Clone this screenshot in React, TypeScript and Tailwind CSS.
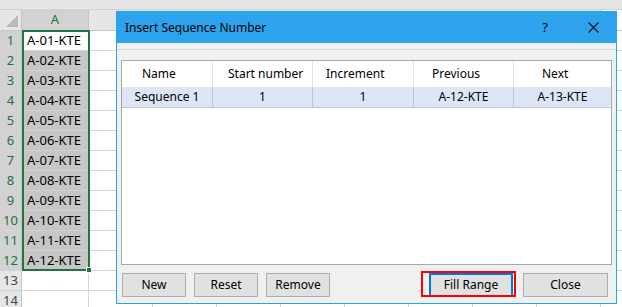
import React from "react";

const rows = Array.from({ length: 14 }, (_, i) => i + 1);
const cols = ["Name", "Start number", "Increment", "Previous", "Next"];

function Sheet() {
  return (
    <div className="flex flex-col">
      {/* formula bar strip */}
      <div className="h-[10px] bg-[#e6e6e6] border-b border-[#d0d0d0]" />
      {/* column headers */}
      <div className="flex h-[21px] border-b border-[#c6c6c6]">
        <div className="relative w-[22px] bg-[#e6e6e6] border-r border-[#c6c6c6]">
          <div className="absolute right-[3px] bottom-[3px] w-0 h-0 border-l-[12px] border-l-transparent border-b-[12px] border-b-[#b9b9b9]" />
        </div>
        <div className="w-[67px] bg-[#d2d2d2] border-r border-[#c6c6c6] flex items-center justify-center text-[#217346] text-[13px]">
          A
        </div>
        {[0, 1, 2, 3, 4, 5, 6, 7].map((c) => (
          <div key={c} className="w-[64px] shrink-0 bg-[#e6e6e6] border-r border-[#c6c6c6]" />
        ))}
      </div>
      {rows.map((r) => {
        const sel = r <= 12;
        return (
          <div key={r} className="flex h-[20px] border-b border-[#d4d4d4]">
            <div
              className={`w-[22px] shrink-0 flex items-center justify-center text-[13px] border-r border-[#c6c6c6] ${
                sel ? "bg-[#d2d2d2] text-[#217346]" : "bg-[#e6e6e6] text-[#444]"
              }`}
            >
              {r}
            </div>
            <div
              className={`w-[67px] shrink-0 flex items-center pl-[5px] text-[13px] text-black border-r border-[#d4d4d4] ${
                sel && r > 1 ? "bg-[#c6c6c6]" : "bg-white"
              }`}
            >
              {sel ? `A-${String(r).padStart(2, "0")}-KTE` : ""}
            </div>
            {[0, 1, 2, 3, 4, 5, 6, 7].map((c) => (
              <div key={c} className="w-[64px] shrink-0 bg-white border-r border-[#d4d4d4]" />
            ))}
          </div>
        );
      })}
    </div>
  );
}

function Btn({ label, w, focus }: { label: string; w: string; focus?: boolean }) {
  return (
    <div
      className={`${w} h-[24px] flex items-center justify-center text-[12px] text-black bg-[#e1e1e1] border ${
        focus ? "border-[#0078d7] border-2" : "border-[#adadad]"
      }`}
    >
      {label}
    </div>
  );
}

function Dialog() {
  const pads = ["pl-[20px]", "pl-[15px]", "pl-[13px]", "pl-[18px]", "pl-[28px]"];
  const widths = ["w-[91px]", "w-[100px]", "w-[101px]", "w-[100px]", "flex-1"];
  const data = ["Sequence 1", "1", "1", "A-12-KTE", "A-13-KTE"];
  return (
    <div className="absolute left-[116px] top-[11px] w-[501px] h-[293px] border border-[#2ca1ea] bg-[#f0f0f0] flex flex-col">
      <div className="h-[31px] bg-[#2ca3ec] flex items-center pl-[8px] pr-[17px] text-[12px] text-black">
        <span className="flex-1">Insert Sequence Number</span>
        <span className="mr-[40px] text-[13px]">?</span>
        <svg width="11" height="11" viewBox="0 0 11 11">
          <path d="M0.5 0.5 L10.5 10.5 M10.5 0.5 L0.5 10.5" stroke="#111" strokeWidth="1.1" />
        </svg>
      </div>
      <div className="mt-[6px] border-t border-[#dadada] flex-1 flex flex-col px-[4px] pb-[6px]">
        <div className="mt-[10px] h-[205px] border border-[#a8a8a8] bg-white flex flex-col">
          <div className="flex h-[26px] text-[12px] text-black">
            {cols.map((c, i) => (
              <div
                key={c}
                className={`${widths[i]} ${pads[i]} flex items-center ${i < 4 ? "border-r border-[#e3e3e3]" : ""}`}
              >
                {c}
              </div>
            ))}
          </div>
          <div className="flex h-[21px] bg-[#dce6f7] border-b border-[#c8c8c8] text-[12px] text-black">
            {data.map((d, i) => (
              <div
                key={i}
                className={`${widths[i]} flex items-center justify-center ${i < 4 ? "border-r border-[#c3c3c3]" : ""}`}
              >
                {d}
              </div>
            ))}
          </div>
        </div>
        <div className="mt-[8px] flex items-center pl-[1px] pr-[4px]">
          <div className="flex gap-[8px]">
            <Btn label="New" w="w-[64px]" />
            <Btn label="Reset" w="w-[64px]" />
            <Btn label="Remove" w="w-[64px]" />
          </div>
          <div className="ml-auto flex gap-[10px]">
            <Btn label="Fill Range" w="w-[84px]" focus />
            <Btn label="Close" w="w-[85px]" />
          </div>
        </div>
      </div>
    </div>
  );
}

export default function App() {
  return (
    <div
      className="relative w-[622px] h-[307px] overflow-hidden bg-white"
      style={{ fontFamily: '"Noto Sans", "Open Sans", sans-serif' }}
    >
      <Sheet />
      {/* selection outline A1:A12 */}
      <div className="absolute left-[22px] top-[30px] w-[68px] h-[241px] border-2 border-[#217346]" />
      <div className="absolute left-[86px] top-[267px] w-[6px] h-[6px] bg-[#217346] border border-white" />
      <Dialog />
      {/* red highlight */}
      <div className="absolute left-[421px] top-[271px] w-[95px] h-[26px] border-2 border-[#ff0000]" />
    </div>
  );
}
